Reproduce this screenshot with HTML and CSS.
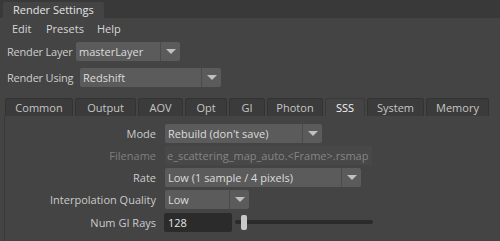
FILE: index.html
```html
<!DOCTYPE html>
<html>
<head>
<meta charset="utf-8">
<link rel="stylesheet" href="styles.css">
</head>
<body>
<div class="win">
  <div class="titlebar"><div class="title-tab">Render Settings</div></div>
  <div class="menubar"><span class="menu m-edit">Edit</span><span class="menu m-presets">Presets</span><span class="menu m-help">Help</span></div>
  <div class="toprow row-layer">
    <span class="toplabel">Render Layer</span>
    <div class="combo combo-layer"><span class="combo-text">masterLayer</span><span class="combo-btn"><span class="arrow"></span></span></div>
  </div>
  <div class="toprow row-using">
    <span class="toplabel">Render Using</span>
    <div class="combo combo-using"><span class="combo-text">Redshift</span><span class="combo-btn"><span class="arrow"></span></span></div>
  </div>
  <div class="tabs">
    <div class="tab t-common">Common</div>
    <div class="tab t-output">Output</div>
    <div class="tab t-aov">AOV</div>
    <div class="tab t-opt">Opt</div>
    <div class="tab t-gi">GI</div>
    <div class="tab t-photon">Photon</div>
    <div class="tab t-sss active">SSS</div>
    <div class="tab t-system">System</div>
    <div class="tab t-memory">Memory</div>
  </div>
  <div class="panel">
    <div class="frow r-mode">
      <span class="flabel">Mode</span>
      <div class="combo combo-mode"><span class="combo-text">Rebuild (don't save)</span><span class="combo-btn"><span class="arrow"></span></span></div>
    </div>
    <div class="frow r-file">
      <span class="flabel dim">Filename</span>
      <div class="filefield"><span class="filetext">e_scattering_map_auto.&lt;Frame&gt;.rsmap</span></div>
    </div>
    <div class="frow r-rate">
      <span class="flabel">Rate</span>
      <div class="combo combo-rate"><span class="combo-text">Low (1 sample / 4 pixels)</span><span class="combo-btn"><span class="arrow"></span></span></div>
    </div>
    <div class="frow r-interp">
      <span class="flabel">Interpolation Quality</span>
      <div class="combo combo-interp"><span class="combo-text">Low</span><span class="combo-btn"><span class="arrow"></span></span></div>
    </div>
    <div class="frow r-num">
      <span class="flabel">Num GI Rays</span>
      <div class="numfield">128</div>
      <div class="slider"><div class="track"></div><div class="handle"></div></div>
    </div>
  </div>
</div>
</body>
</html>
```
FILE: styles.css
```css
html, body {
  margin: 0;
  padding: 0;
  background: #444444;
}
body {
  width: 500px;
  height: 241px;
  overflow: hidden;
  font-family: "Open Sans", "DejaVu Sans", sans-serif;
  font-size: 11px;
  color: #cfcfcf;
}
.win {
  display: flex;
  flex-direction: column;
  height: 241px;
}
.titlebar {
  height: 18px;
  background: #393939;
  display: flex;
  align-items: flex-end;
  padding-left: 3px;
  box-sizing: border-box;
}
.title-tab {
  width: 101px;
  box-sizing: border-box;
  height: 16px;
  line-height: 16px;
  background: #444444;
  padding-left: 10px;
  border-radius: 2px 2px 0 0;
  color: #e4e4e4;
}
.menubar {
  height: 20px;
  display: flex;
  align-items: center;
  padding-left: 12px;
  color: #d6d6d6;
}
.m-edit { width: 34px; }
.m-presets { width: 51px; }
.toprow {
  display: flex;
  align-items: center;
  padding-left: 7px;
  height: 19px;
}
.row-layer { margin-top: 4px; }
.row-using { margin-top: 7px; }
.toplabel { color: #cdcdcd; flex: none; letter-spacing: -0.2px; }
.row-layer .toplabel { width: 69px; }
.row-using .toplabel { width: 73px; }
.combo {
  height: 19px;
  display: flex;
  background: #5b5b5b;
  border-radius: 2px;
  box-sizing: border-box;
  flex: none;
}
.combo-text {
  flex: 1;
  line-height: 19px;
  padding-left: 3px;
  color: #dcdcdc;
  white-space: nowrap;
  overflow: hidden;
}
.combo-btn {
  width: 19px;
  border-left: 1px solid #4b4b4b;
  display: flex;
  align-items: center;
  justify-content: center;
}
.arrow {
  width: 0;
  height: 0;
  border-left: 5px solid transparent;
  border-right: 5px solid transparent;
  border-top: 5px solid #c0c0c0;
}
.combo-layer { width: 104px; }
.combo-using { width: 141px; }

.tabs {
  margin-top: 11px;
  height: 18px;
  display: flex;
  padding-left: 5px;
  gap: 2px;
}
.tab {
  height: 18px;
  box-sizing: border-box;
  line-height: 17px;
  text-align: center;
  background: #3b3b3b;
  border: 1px solid #333333;
  border-bottom: none;
  border-radius: 3px 3px 0 0;
  color: #c6c6c6;
}
.tab.active {
  background: #444444;
  color: #f4f4f4;
  border-color: #3a3a3a;
}
.t-common { width: 68px; }
.t-output { width: 61px; }
.t-aov { width: 45px; }
.t-opt { width: 42px; }
.t-gi { width: 36px; }
.t-photon { width: 56px; }
.t-sss { width: 40px; }
.t-system { width: 57px; }
.t-memory { width: 63px; }

.panel {
  flex: 1;
  margin-left: 4px;
  border-left: 1px solid #393939;
  padding-top: 8px;
  display: flex;
  flex-direction: column;
}
.frow {
  display: flex;
  align-items: center;
  height: 19px;
}
.r-file, .r-rate, .r-interp { margin-top: 3px; }
.r-num { margin-top: 4px; }
.flabel {
  width: 151px;
  text-align: right;
  padding-right: 9px;
  color: #cbcbcb;
  flex: none;
}
.flabel.dim { color: #7f7f7f; }
.combo-mode { width: 157px; }
.combo-rate { width: 196px; }
.combo-interp { width: 84px; }
.filefield {
  width: 207px;
  height: 19px;
  background: #484848;
  overflow: hidden;
  white-space: nowrap;
  line-height: 19px;
  padding-left: 2px;
  box-sizing: border-box;
}
.filetext { color: #858585; }
.numfield {
  width: 68px;
  height: 19px;
  line-height: 19px;
  background: #2b2b2b;
  border-radius: 2px;
  padding-left: 4px;
  box-sizing: border-box;
  color: #e6e6e6;
  margin-left: -1px;
  flex: none;
}
.slider {
  position: relative;
  width: 138px;
  height: 19px;
  margin-left: 3px;
}
.track {
  position: absolute;
  left: 0;
  right: 0;
  top: 7px;
  height: 4px;
  border-radius: 2px;
  background: #2b2b2b;
}
.handle {
  position: absolute;
  left: 6px;
  top: 2px;
  width: 6px;
  height: 15px;
  border-radius: 2px;
  background: #c8c8c8;
}
```
